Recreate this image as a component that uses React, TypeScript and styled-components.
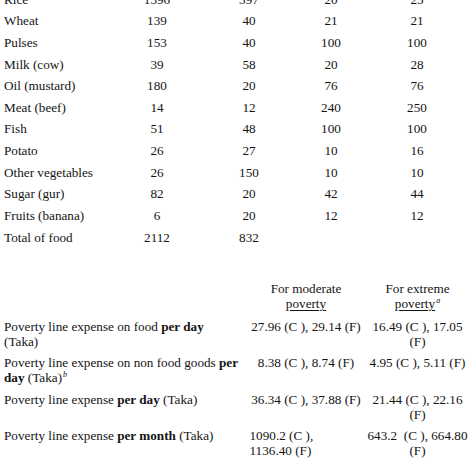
import styled, { createGlobalStyle } from "styled-components";

const GlobalStyle = createGlobalStyle`
  html, body {
    margin: 0;
    padding: 0;
    background: #ffffff;
  }
  body {
    font-family: "Liberation Serif", "Times New Roman", serif;
    font-size: 13.2px;
    color: #141414;
  }
`;

interface CellProps {
  $align?: "left" | "center";
}

const foods: [string, string, string, string, string][] = [
  ["Rice", "1396", "397", "20", "25"],
  ["Wheat", "139", "40", "21", "21"],
  ["Pulses", "153", "40", "100", "100"],
  ["Milk (cow)", "39", "58", "20", "28"],
  ["Oil (mustard)", "180", "20", "76", "76"],
  ["Meat (beef)", "14", "12", "240", "250"],
  ["Fish", "51", "48", "100", "100"],
  ["Potato", "26", "27", "10", "16"],
  ["Other vegetables", "26", "150", "10", "10"],
  ["Sugar (gur)", "82", "20", "42", "44"],
  ["Fruits (banana)", "6", "20", "12", "12"],
  ["Total of food", "2112", "832", "", ""],
];

function App() {
  return (
    <>
      <GlobalStyle />
      <Page>
        <FoodTable>
          {foods.map((row) => (
            <FoodRow key={row[0]}>
              <Cell>{row[0]}</Cell>
              <Cell $align="center">{row[1]}</Cell>
              <Cell $align="center">{row[2]}</Cell>
              <Cell $align="center">{row[3]}</Cell>
              <Cell $align="center">{row[4]}</Cell>
            </FoodRow>
          ))}
        </FoodTable>

        <PovertyTable>
          <HeadRow>
            <PovCell />
            <PovCell $align="center">
              For moderate
              <br />
              <Under>poverty</Under>
            </PovCell>
            <PovCell $align="center">
              For extreme
              <br />
              <Under>poverty</Under>
              <Sup>a</Sup>
            </PovCell>
          </HeadRow>

          <PovRow>
            <PovCell>
              Poverty line expense on food <Strong>per day</Strong>
              <br />
              (Taka)
            </PovCell>
            <PovCell $align="center">27.96 (C ), 29.14 (F)</PovCell>
            <PovCell $align="center">
              16.49 (C ), 17.05
              <br />
              (F)
            </PovCell>
          </PovRow>

          <PovRow>
            <PovCell>
              Poverty line expense on non food goods <Strong>per</Strong>
              <br />
              <Strong>day</Strong> (Taka)<Sup>b</Sup>
            </PovCell>
            <PovCell $align="center">8.38 (C ), 8.74 (F)</PovCell>
            <PovCell $align="center">4.95 (C ), 5.11 (F)</PovCell>
          </PovRow>

          <PovRow>
            <PovCell>
              Poverty line expense <Strong>per day</Strong> (Taka)
            </PovCell>
            <PovCell $align="center">36.34 (C ), 37.88 (F)</PovCell>
            <PovCell $align="center">
              21.44 (C ), 22.16
              <br />
              (F)
            </PovCell>
          </PovRow>

          <PovRow>
            <PovCell>
              Poverty line expense <Strong>per month</Strong> (Taka)
            </PovCell>
            <PovCell>
              1090.2 (C ),
              <br />
              1136.40 (F)
            </PovCell>
            <PovCell $align="center">
              643.2{"\u00a0"} (C ), 664.80
              <br />
              (F)
            </PovCell>
          </PovRow>
        </PovertyTable>
      </Page>
    </>
  );
}

const Page = styled.div`
  width: 474px;
  height: 474px;
  overflow: hidden;
  background: #ffffff;
`;

const FoodTable = styled.div`
  margin-top: -11.4px;
  padding-left: 4px;
`;

const FoodRow = styled.div`
  display: grid;
  grid-template-columns: 109px 88px 96px 68px 104px;
  height: 21.65px;
  line-height: 21.65px;
`;

const Cell = styled.div<CellProps>`
  text-align: ${(p) => p.$align || "left"};
  white-space: nowrap;
`;

const PovertyTable = styled.div`
  margin-top: 32.5px;
  padding-left: 4px;
`;

const PovRow = styled.div`
  display: grid;
  grid-template-columns: 242px 113px 103px;
  column-gap: 3.5px;
  line-height: 15.2px;
  padding: 3px 0;
`;

const HeadRow = styled(PovRow)`
  padding: 0 0 4.6px;
`;

const PovCell = styled.div<CellProps>`
  text-align: ${(p) => p.$align || "left"};
  white-space: nowrap;
`;

const Strong = styled.span`
  font-weight: 700;
`;

const Under = styled.span`
  text-decoration: underline;
  text-underline-offset: 2px;
`;

const Sup = styled.sup`
  font-size: 8px;
  font-style: italic;
  line-height: 0;
  vertical-align: 5px;
  margin-left: 1px;
`;

export default App;
